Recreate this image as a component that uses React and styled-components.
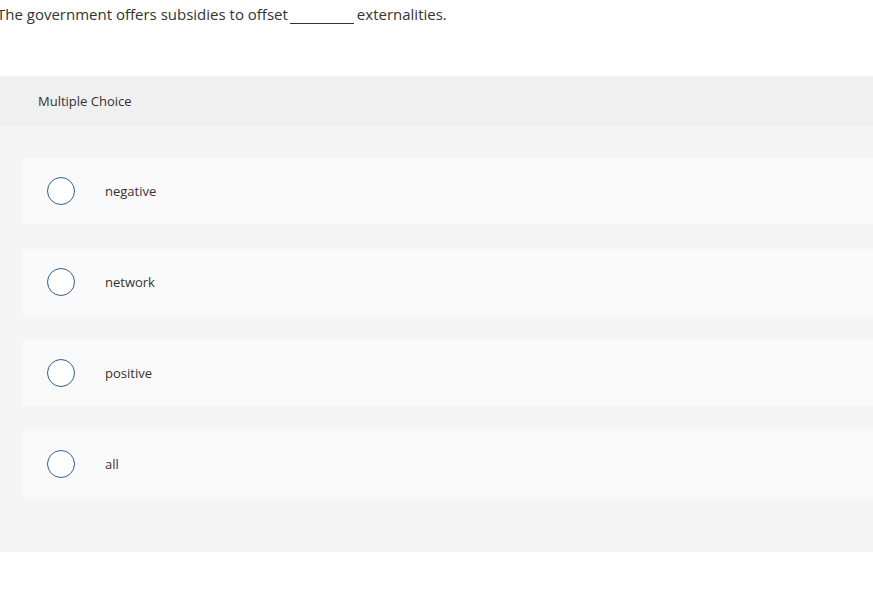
import styled, {createGlobalStyle} from "styled-components";

const GlobalStyle = createGlobalStyle`
  html, body {
    margin: 0;
    padding: 0;
    background: #fff;
  }
  body {
    font-family: "Open Sans", "Liberation Sans", Arial, sans-serif;
    color: #333;
  }
`;

const options = ["negative", "network", "positive", "all"];

const Page = styled.div`
  width: 873px;
  overflow: hidden;
`;

const Question = styled.p`
  margin: 0 0 0 -3px;
  padding: 5px 0 0;
  height: 76px;
  box-sizing: border-box;
  font-size: 15px;
  line-height: 18px;
  color: #333;
  white-space: nowrap;
`;

const Blank = styled.span`
  display: inline-block;
  width: 64px;
  border-bottom: 1px solid #333;
  margin: 0 3px 0 2px;
  vertical-align: baseline;
`;

const Header = styled.div`
  height: 50px;
  background: #f0f0f0;
  display: flex;
  align-items: center;
  padding-left: 38px;
  font-size: 13px;
  color: #333;
`;

const Body = styled.div`
  background: #f5f5f5;
  padding: 32px 0 55px 22px;
  display: flex;
  flex-direction: column;
  gap: 25px;
`;

const Option = styled.label`
  height: 66px;
  background: #fafafa;
  border-radius: 3px 0 0 3px;
  display: flex;
  align-items: center;
  padding-left: 25px;
  font-size: 13px;
  color: #333;
  cursor: pointer;
`;

const Radio = styled.span`
  box-sizing: border-box;
  width: 28px;
  height: 28px;
  border-radius: 50%;
  border: 1.5px solid #2f6093;
  background: #fff;
  flex: none;
  margin-right: 30px;
`;

export default function App() {
    return (
        <Page>
            <GlobalStyle />
            <Question>
                The government offers subsidies to offset<Blank>&nbsp;</Blank>externalities.
            </Question>
            <Header>Multiple Choice</Header>
            <Body>
                {options.map(o => (
                    <Option key={o}>
                        <Radio />
                        {o}
                    </Option>
                ))}
            </Body>
        </Page>
    );
}
